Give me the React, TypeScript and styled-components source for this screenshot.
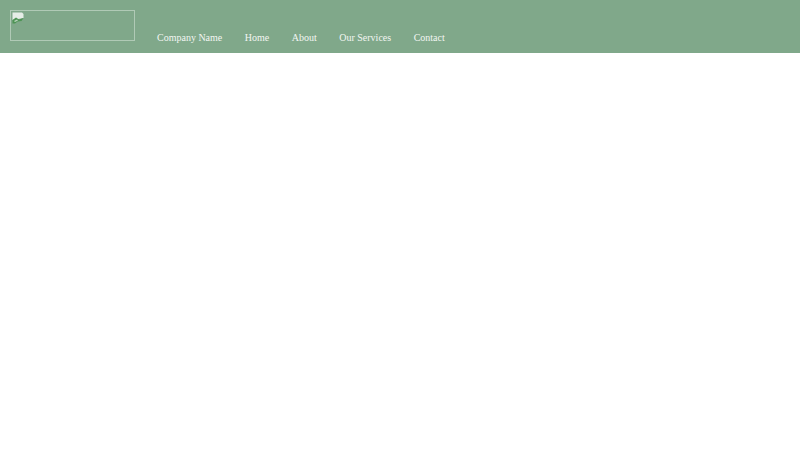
import React from 'react';
import styled, { createGlobalStyle } from 'styled-components';

const GlobalStyle = createGlobalStyle`
  html, body {
    margin: 0;
    padding: 0;
    background: #ffffff;
    font-family: 'Liberation Serif', 'Times New Roman', serif;
  }
`;

const Header = styled.header`
  display: flex;
  align-items: flex-start;
  height: 53px;
  box-sizing: border-box;
  padding: 10px 10px 0;
  background: #80a88a;
`;

const Logo = styled.div`
  position: relative;
  width: 125px;
  height: 31px;
  box-sizing: border-box;
  border: 1px solid rgba(215, 230, 219, 0.55);
  flex-shrink: 0;

  svg {
    position: absolute;
    top: 1px;
    left: 1px;
  }
`;

const Nav = styled.ul`
  display: flex;
  gap: 22.5px;
  list-style: none;
  margin: 22.6px 0 0 22px;
  padding: 0;
`;

const NavItem = styled.li`
  font-size: 10px;
  line-height: 10px;
  color: #f2f6f2;
  white-space: nowrap;
  cursor: pointer;
`;

const BrokenImage = () => (
  <svg width="12" height="12" viewBox="0 0 12 12">
    <path d="M0.5 0.5 H10 L11.5 2 V6 L0.5 8 Z" fill="#e6ede7" />
    <path d="M0.5 8 L4 5.5 L7 7.5 L11.5 6 L9.5 9 L5.5 9.5 L3 11.5 L0.5 11.5 Z" fill="#4e9455" />
    <path d="M2 9 L5 7.5 L6 8.5 L3 10 Z" fill="#b9d2bd" />
  </svg>
);

const links = ['Company Name', 'Home', 'About', 'Our Services', 'Contact'];

const App = () => (
  <>
    <GlobalStyle />
    <Header>
      <Logo>
        <BrokenImage />
      </Logo>
      <Nav>
        {links.map(link => (
          <NavItem key={link}>{link}</NavItem>
        ))}
      </Nav>
    </Header>
  </>
);

export default App;
